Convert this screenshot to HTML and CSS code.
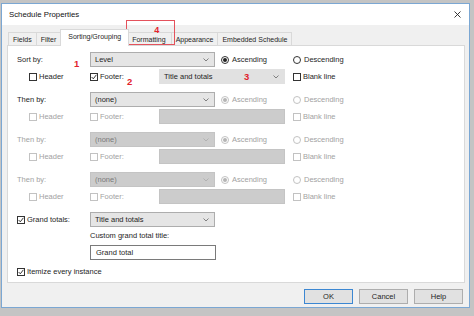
FILE: index.html
```html
<!DOCTYPE html>
<html lang="en">
<head>
<meta charset="UTF-8">
<title>Schedule Properties</title>
<link rel="stylesheet" href="styles.css">
</head>
<body>

<div class="window">
    <div class="titlebar">
        <span class="title">Schedule Properties</span>
        <svg class="close" width="7" height="7" viewBox="0 0 7 7"><path d="M0.5 0.5 L6.5 6.5 M6.5 0.5 L0.5 6.5" stroke="#222" stroke-width="0.9"/></svg>
    </div>

    <div class="body">
        <div class="tabs">
            <div class="tab">Fields</div>
            <div class="tab">Filter</div>
            <div class="tab active">Sorting/Grouping</div>
            <div class="tab marked">Formatting<span class="mark-box"><span class="num n4">4</span></span></div>
            <div class="tab">Appearance</div>
            <div class="tab">Embedded Schedule</div>
        </div>

        <div class="panel">
            <!-- sort by -->
            <div class="group">
                <div class="row">
                    <span class="label">Sort by:<span class="num n1">1</span></span>
                    <div class="combo"><span>Level</span><svg class="chev" width="6" height="4" viewBox="0 0 6 4"><path d="M0.5 0.5 L3 3 L5.5 0.5" fill="none" stroke="#666" stroke-width="0.8"/></svg></div>
                    <span class="radio asc"><i class="dot on"></i>Ascending</span>
                    <span class="radio"><i class="dot"></i>Descending</span>
                </div>
                <div class="row">
                    <span class="check hdr"><i class="box"></i>Header</span>
                    <span class="check ftr"><i class="box"><svg width="6" height="6" viewBox="0 0 6 6"><path d="M0.6 3 L2.3 4.8 L5.4 0.8" fill="none" stroke="#222" stroke-width="0.9"/></svg></i>Footer:<span class="num n2">2</span></span>
                    <div class="combo wide"><span>Title and totals</span><span class="num n3">3</span><svg class="chev" width="6" height="4" viewBox="0 0 6 4"><path d="M0.5 0.5 L3 3 L5.5 0.5" fill="none" stroke="#666" stroke-width="0.8"/></svg></div>
                    <span class="check blank"><i class="box"></i>Blank line</span>
                </div>
            </div>

            <!-- then by 1 -->
            <div class="group">
                <div class="row">
                    <span class="label">Then by:</span>
                    <div class="combo"><span>(none)</span><svg class="chev" width="6" height="4" viewBox="0 0 6 4"><path d="M0.5 0.5 L3 3 L5.5 0.5" fill="none" stroke="#666" stroke-width="0.8"/></svg></div>
                    <span class="radio asc off"><i class="dot on"></i>Ascending</span>
                    <span class="radio off"><i class="dot"></i>Descending</span>
                </div>
                <div class="row off">
                    <span class="check hdr"><i class="box"></i>Header</span>
                    <span class="check ftr"><i class="box"></i>Footer:</span>
                    <div class="combo wide off"></div>
                    <span class="check blank"><i class="box"></i>Blank line</span>
                </div>
            </div>

            <!-- then by 2 -->
            <div class="group off">
                <div class="row">
                    <span class="label">Then by:</span>
                    <div class="combo off"><span>(none)</span><svg class="chev" width="6" height="4" viewBox="0 0 6 4"><path d="M0.5 0.5 L3 3 L5.5 0.5" fill="none" stroke="#aaa" stroke-width="0.8"/></svg></div>
                    <span class="radio asc"><i class="dot on"></i>Ascending</span>
                    <span class="radio"><i class="dot"></i>Descending</span>
                </div>
                <div class="row">
                    <span class="check hdr"><i class="box"></i>Header</span>
                    <span class="check ftr"><i class="box"></i>Footer:</span>
                    <div class="combo wide off"></div>
                    <span class="check blank"><i class="box"></i>Blank line</span>
                </div>
            </div>

            <!-- then by 3 -->
            <div class="group off">
                <div class="row">
                    <span class="label">Then by:</span>
                    <div class="combo off"><span>(none)</span><svg class="chev" width="6" height="4" viewBox="0 0 6 4"><path d="M0.5 0.5 L3 3 L5.5 0.5" fill="none" stroke="#aaa" stroke-width="0.8"/></svg></div>
                    <span class="radio asc"><i class="dot on"></i>Ascending</span>
                    <span class="radio"><i class="dot"></i>Descending</span>
                </div>
                <div class="row">
                    <span class="check hdr"><i class="box"></i>Header</span>
                    <span class="check ftr"><i class="box"></i>Footer:</span>
                    <div class="combo wide off"></div>
                    <span class="check blank"><i class="box"></i>Blank line</span>
                </div>
            </div>

            <!-- grand totals -->
            <div class="row grand">
                <span class="check label"><i class="box"><svg width="6" height="6" viewBox="0 0 6 6"><path d="M0.6 3 L2.3 4.8 L5.4 0.8" fill="none" stroke="#222" stroke-width="0.9"/></svg></i>Grand totals:</span>
                <div class="combo"><span>Title and totals</span><svg class="chev" width="6" height="4" viewBox="0 0 6 4"><path d="M0.5 0.5 L3 3 L5.5 0.5" fill="none" stroke="#666" stroke-width="0.8"/></svg></div>
            </div>
            <div class="custom-title">Custom grand total title:</div>
            <div class="text-input">Grand total</div>
            <div class="row itemize">
                <span class="check"><i class="box"><svg width="6" height="6" viewBox="0 0 6 6"><path d="M0.6 3 L2.3 4.8 L5.4 0.8" fill="none" stroke="#222" stroke-width="0.9"/></svg></i>Itemize every instance</span>
            </div>
        </div>

        <div class="footer">
            <div class="button default">OK</div>
            <div class="button">Cancel</div>
            <div class="button">Help</div>
        </div>
    </div>
</div>

</body>
</html>
```

FILE: styles.css
```css
body {
    margin: 0;
    background-color: #c4c4c4;
    font-family: "Liberation Sans", Arial, sans-serif;
    font-size: 7.5px;
    color: #1e1e1e;
}
.window {
    margin: 3px 0 0 1px;
    width: 467px;
    height: 303px;
    border: 1px solid #7ba7d3;
    background-color: #f0f0f0;
    display: flex;
    flex-direction: column;
}
.titlebar {
    height: 21px;
    flex-shrink: 0;
    background-color: #fff;
    display: flex;
    align-items: center;
    justify-content: space-between;
    padding: 0 8px 0 7px;
}
.title {
    font-size: 7.8px;
    color: #111;
}
.body {
    flex: 1;
    padding: 4px 4px 0 5px;
    display: flex;
    flex-direction: column;
}

/* tabs */
.tabs {
    display: flex;
    align-items: flex-end;
    height: 16px;
    padding-left: 2px;
    font-size: 7px;
}
.tab {
    height: 13px;
    line-height: 11px;
    box-sizing: border-box;
    padding: 1px 4px 0;
    border: 1px solid #d9d9d9;
    border-bottom: none;
    margin-left: -1px;
    background-color: #f0f0f0;
    white-space: nowrap;
}
.tab.active {
    height: 17px;
    line-height: 13px;
    padding: 0 7px;
    margin: 0 -2px -1px -1px;
    background-color: #fff;
    position: relative;
    z-index: 1;
}
.tab.marked {
    position: relative;
    padding: 1px 5px 0;
}
.mark-box {
    position: absolute;
    left: -1px;
    right: -4px;
    top: -13px;
    bottom: 0;
    border: 1px solid #e4525c;
}
.num {
    position: absolute;
    color: #e2232c;
    font-weight: bold;
    font-size: 9.5px;
    line-height: 10px;
}
.n1 { left: 57px; top: 7px; }
.n2 { left: 37px; top: 8px; }
.n3 { left: 84px; top: 2px; }
.n4 { left: 27px; top: 5px; line-height: 8px; font-size: 9px; }

/* panel */
.panel {
    height: 238px;
    box-sizing: border-box;
    background-color: #fff;
    border: 1px solid #d9d9d9;
    padding: 6px 0 0 9px;
}
.group {
    margin-bottom: 8px;
}
.row {
    display: flex;
    align-items: center;
    height: 15px;
    position: relative;
}
.row + .row {
    margin-top: 2px;
}
.label {
    width: 73px;
    position: relative;
    align-self: stretch;
    display: flex;
    align-items: center;
}
.combo {
    width: 125px;
    height: 15px;
    box-sizing: border-box;
    border: 1px solid #adadad;
    background-color: #e5e5e5;
    display: flex;
    align-items: center;
    justify-content: space-between;
    padding: 0 5px 0 4px;
    position: relative;
}
.combo.wide {
    width: 126px;
    border-color: #e1e1e1;
    background-color: #e1e1e1;
}
.combo.off {
    background-color: #cccccc;
    border-color: #c4c4c4;
    color: #7a7a7a;
}

.radio, .check {
    display: flex;
    align-items: center;
    white-space: nowrap;
}
.radio.asc {
    margin-left: 6px;
    width: 72px;
}
.dot {
    width: 8px;
    height: 8px;
    box-sizing: border-box;
    border: 1px solid #333;
    border-radius: 50%;
    margin-right: 3px;
    display: flex;
    align-items: center;
    justify-content: center;
}
.dot.on::after {
    content: "";
    width: 4px;
    height: 4px;
    border-radius: 50%;
    background-color: #222;
}
.box {
    width: 8px;
    height: 8px;
    box-sizing: border-box;
    border: 1px solid #333;
    background-color: #fff;
    margin-right: 2px;
    display: flex;
    align-items: center;
    justify-content: center;
}
.check.hdr {
    width: 61px;
    padding-left: 12px;
}
.check.ftr {
    width: 69px;
    position: relative;
    align-self: stretch;
}
.check.blank {
    margin-left: 8px;
}

/* disabled */
.off .label, .off .radio, .off .check,
.radio.off, .row.off .check {
    color: #a2a2a2;
}
.off .dot, .radio.off .dot,
.off .box {
    border-color: #c2c2c2;
}
.off .dot.on::after, .radio.off .dot.on::after {
    background-color: #b5b5b5;
}

/* grand totals */
.grand {
    margin-top: 1px;
}
.custom-title {
    margin: 2px 0 0 73px;
    height: 14px;
    line-height: 14px;
}
.text-input {
    margin: 2px 0 0 73px;
    width: 126px;
    height: 15px;
    box-sizing: border-box;
    border: 1px solid #7a7a7a;
    line-height: 13px;
    padding-left: 5px;
}
.itemize {
    margin-top: 4px;
}

/* buttons */
.footer {
    display: flex;
    justify-content: flex-end;
    gap: 6px;
    padding: 6px 2px 0 0;
}
.button {
    width: 49px;
    height: 15px;
    box-sizing: border-box;
    border: 1px solid #adadad;
    background-color: #e1e1e1;
    text-align: center;
    line-height: 13px;
}
.button.default {
    border-color: #3c87d2;
}
```
